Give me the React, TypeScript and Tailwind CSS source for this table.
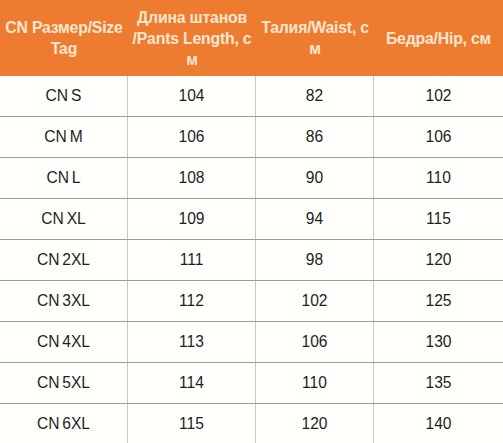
import React from "react";

const rows = [
  ["CN S", "104", "82", "102"],
  ["CN M", "106", "86", "106"],
  ["CN L", "108", "90", "110"],
  ["CN XL", "109", "94", "115"],
  ["CN 2XL", "111", "98", "120"],
  ["CN 3XL", "112", "102", "125"],
  ["CN 4XL", "113", "106", "130"],
  ["CN 5XL", "114", "110", "135"],
  ["CN 6XL", "115", "120", "140"],
];

const widths = ["w-[128px]", "w-[128px]", "w-[118px]", "w-[129px]"];

export default function App() {
  return (
    <div
      className="w-[503px] h-[443px] overflow-hidden bg-[#fffffb]"
      style={{ fontFamily: '"Liberation Sans", Arial, sans-serif' }}
    >
      <div className="flex h-[76px] bg-[#ee7c30] text-[#fce6cf] font-bold text-[15.8px] leading-[21px] tracking-[-0.2px]">
        <div className="w-[128px] flex items-center justify-center text-center">
          <div>CN Размер/Size<br />Tag</div>
        </div>
        <div className="w-[128px] flex items-center justify-center text-center">
          <div>Длина штанов<br />/Pants Length, с<br />м</div>
        </div>
        <div className="w-[118px] flex items-center justify-center text-center">
          <div>Талия/Waist, с<br />м</div>
        </div>
        <div className="w-[129px] flex items-center justify-center text-center">
          <div>Бедра/Hip, см</div>
        </div>
      </div>
      {rows.map((r, i) => (
        <div key={i} className="flex h-[41px] border-b border-[#a99c84] text-[15.6px] text-[#1e1e1e]">
          {r.map((c, j) => (
            <div
              key={j}
              className={`${widths[j]} flex items-center justify-center ${j < 3 ? "border-r border-[#c9c9c9]" : ""} ${j === 0 ? "[word-spacing:-1.5px]" : ""}`}
            >
              {c}
            </div>
          ))}
        </div>
      ))}
    </div>
  );
}
